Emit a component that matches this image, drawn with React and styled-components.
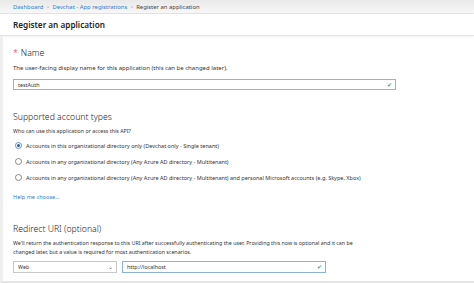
import React from "react";
import styled, { createGlobalStyle } from "styled-components";

const Global = createGlobalStyle`
  html, body { margin: 0; padding: 0; background: #fff; }
  body { font-family: "Noto Sans", "Open Sans", sans-serif; color: #323130; }
`;

const Page = styled.div`
  width: 474px;
  height: 283px;
  overflow: hidden;
  display: flex;
  flex-direction: column;
`;

const Crumbs = styled.div`
  height: 13px;
  padding-left: 13px;
  display: flex;
  align-items: center;
  gap: 3px;
  font-size: 5.9px;
  background: linear-gradient(#e9e9e9, #f7f7f7);
  border-bottom: 1px solid #e3e3e3;
`;

const Crumb = styled.span`
  color: ${(p) => (p.current ? "#444" : "#2f7fc9")};
`;

const Sep = styled.span`
  color: #999;
  font-size: 5px;
`;

const TitleBar = styled.div`
  height: 21px;
  padding-left: 13px;
  display: flex;
  align-items: center;
  font-size: 8.2px;
  font-weight: 600;
  color: #222;
  border-bottom: 1px solid #e6e6e6;
  box-shadow: 0 1px 2px rgba(0, 0, 0, 0.06);
`;

const Body = styled.div`
  flex: 1;
  display: flex;
  border-left: 3px solid #efefef;
  border-bottom: 2px solid #e4e4e4;
`;

const Form = styled.div`
  padding: 11px 0 0 10px;
  display: flex;
  flex-direction: column;
  flex: 1;
`;

const Heading = styled.div`
  font-size: 8.7px;
  font-weight: 300;
  color: #222;
  margin-top: ${(p) => p.top || 0}px;
  line-height: 12px;
`;

const Star = styled.span`
  color: #d13438;
  margin-right: 3px;
`;

const Help = styled.div`
  font-size: ${(p) => p.size || 5.6}px;
  line-height: 9px;
  color: #333;
  margin-top: ${(p) => p.top || 4}px;
`;

const TextBox = styled.div`
  width: ${(p) => p.w}px;
  height: ${(p) => p.h || 11}px;
  box-sizing: border-box;
  border: 1px solid ${(p) => p.border};
  display: flex;
  align-items: center;
  justify-content: space-between;
  padding: 0 3px 0 4px;
  font-size: 5.4px;
  color: #333;
`;

const Check = styled.span`
  color: #57a64a;
  font-size: 6px;
  line-height: 1;
`;

const Radios = styled.div`
  display: flex;
  flex-direction: column;
  gap: 7px;
  margin-top: 5px;
`;

const RadioRow = styled.div`
  height: 9px;
  display: flex;
  align-items: center;
  gap: 4px;
  padding-left: 2px;
  font-size: 5.5px;
  color: #333;
`;

const Circle = styled.span`
  width: 7px;
  height: 7px;
  box-sizing: border-box;
  border-radius: 50%;
  border: 1px solid ${(p) => (p.on ? "#6c8ebf" : "#888")};
  display: flex;
  align-items: center;
  justify-content: center;
  &::after {
    content: "";
    width: 3px;
    height: 3px;
    border-radius: 50%;
    background: ${(p) => (p.on ? "#1f5fa8" : "transparent")};
  }
`;

const Link = styled.div`
  font-size: 5.6px;
  line-height: 9px;
  color: #2f7fc9;
  margin-top: 11px;
`;

const UriRow = styled.div`
  display: flex;
  gap: 5px;
  margin-top: 4px;
`;

const Select = styled(TextBox)`
  border-color: #c8c8c8;
`;

const Chevron = styled.span`
  font-size: 6px;
  color: #555;
`;

const radios = [
  ["Accounts in this organizational directory only (Devchat only - Single tenant)", true],
  ["Accounts in any organizational directory (Any Azure AD directory - Multitenant)", false],
  ["Accounts in any organizational directory (Any Azure AD directory - Multitenant) and personal Microsoft accounts (e.g. Skype, Xbox)", false],
];

export default function App() {
  return (
    <Page>
      <Global />
      <Crumbs>
        <Crumb>Dashboard</Crumb>
        <Sep>&gt;</Sep>
        <Crumb>Devchat - App registrations</Crumb>
        <Sep>&gt;</Sep>
        <Crumb current>Register an application</Crumb>
      </Crumbs>
      <TitleBar>Register an application</TitleBar>
      <Body>
        <Form>
          <Heading><Star>*</Star>Name</Heading>
          <Help top={5} size={6}>The user-facing display name for this application (this can be changed later).</Help>
          <div style={{ marginTop: 6 }}>
            <TextBox w={383} border="#b7a1cf">
              testAuth
              <Check>✔</Check>
            </TextBox>
          </div>
          <Heading top={21}>Supported account types</Heading>
          <Help top={4} size={5.3}>Who can use this application or access this API?</Help>
          <Radios>
            {radios.map(([label, on]) => (
              <RadioRow key={label}>
                <Circle on={on} />
                {label}
              </RadioRow>
            ))}
          </Radios>
          <Link>Help me choose...</Link>
          <Heading top={21}>Redirect URI (optional)</Heading>
          <Help top={4} size={5.3}>
            We'll return the authentication response to this URI after successfully authenticating the user. Providing this now is optional and it can be
            <br />
            changed later, but a value is required for most authentication scenarios.
          </Help>
          <UriRow>
            <Select w={104} h={12}>
              Web
              <Chevron>⌄</Chevron>
            </Select>
            <TextBox w={204} h={12} border="#8fb0d8">
              http://localhost
              <Check>✔</Check>
            </TextBox>
          </UriRow>
        </Form>
      </Body>
    </Page>
  );
}
